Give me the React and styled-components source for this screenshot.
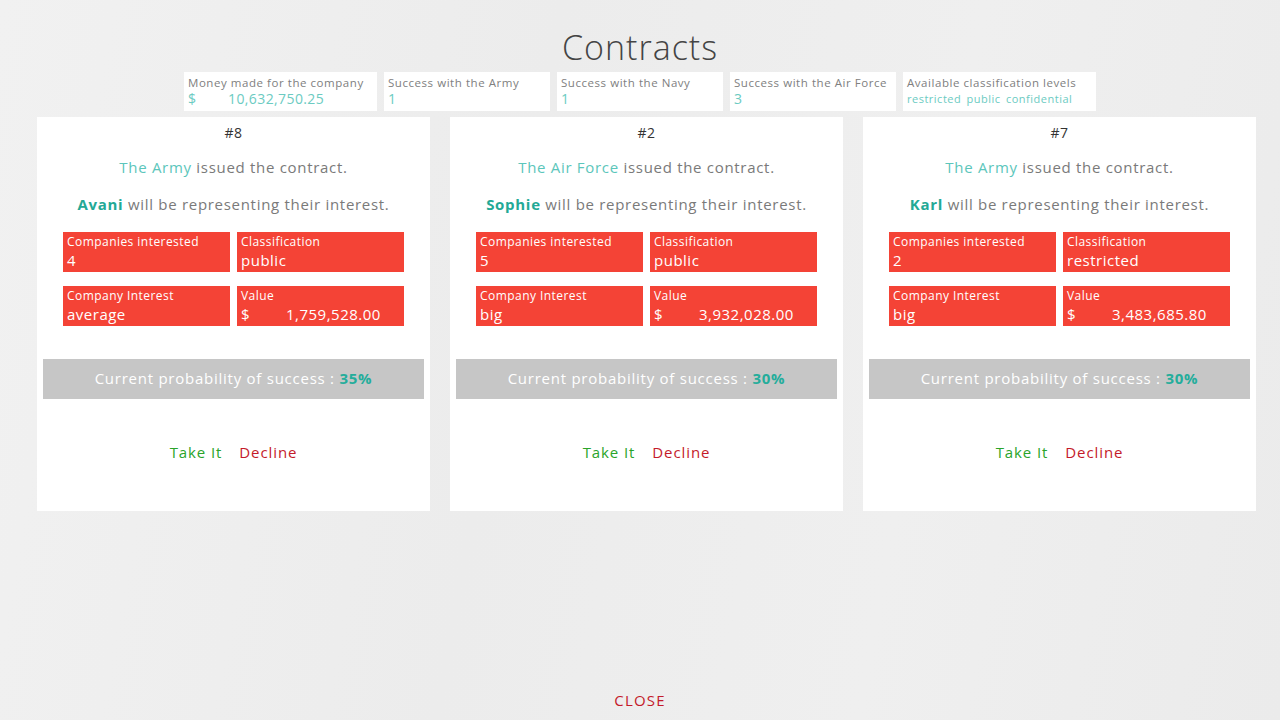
import React from "react";
import styled, { createGlobalStyle } from "styled-components";

const GlobalStyle = createGlobalStyle`
  html, body {
    margin: 0;
    padding: 0;
    background: #efefef;
    font-family: "Open Sans", "DejaVu Sans", sans-serif;
  }
`

const Page = styled.div`
  width: 1280px;
  height: 720px;
  display: flex;
  flex-direction: column;
  align-items: center;
  background: linear-gradient(100deg, #f1f1f1 0%, #ececec 40%, #efefef 70%, #ebebeb 100%);
  overflow: hidden;
`
const Title = styled.h1`
  margin: 26px 0 0;
  height: 42px;
  line-height: 42px;
  font-size: 34px;
  font-weight: 300;
  color: #444;
  letter-spacing: 1px;
`
const Stats = styled.div`
  display: flex;
  gap: 7px;
  margin-top: 4px;
`
const Stat = styled.div`
  width: ${props => props.wide ? "193px" : "166px"};
  height: 39px;
  box-sizing: border-box;
  padding: 3px 4px 0;
  background: #fff;
`
const StatLabel = styled.div`
  font-size: 11.5px;
  line-height: 15px;
  color: #808080;
  white-space: nowrap;
  letter-spacing: 0.55px;
`
const StatValue = styled.div`
  font-size: ${props => props.small ? "11px" : "14px"};
  line-height: 18px;
  color: #6ccbc2;
  white-space: nowrap;
  letter-spacing: ${props => props.small ? "0.5px" : "0.4px"};
  word-spacing: ${props => props.small ? "2px" : "normal"};
`
const Money = styled.span`
  display: inline-block;
  width: 40px;
`
const Cards = styled.div`
  display: flex;
  gap: 20px;
  margin-top: 6px;
  padding-left: 13px;
`
const Card = styled.div`
  width: 393px;
  height: 394px;
  box-sizing: border-box;
  padding: 7px 6px 0;
  background: #fff;
  display: flex;
  flex-direction: column;
  align-items: center;
`
const Number = styled.div`
  font-size: 14px;
  line-height: 18px;
  color: #333;
  letter-spacing: 0.5px;
`
const Line = styled.div`
  font-size: 15px;
  line-height: 20px;
  color: #7a7a7a;
  letter-spacing: 0.7px;
  margin-top: ${props => props.gap};
`
const Issuer = styled.span`
  color: #5cc6bb;
`
const Agent = styled.span`
  color: #23a996;
  font-weight: 700;
`
const Grid = styled.div`
  display: grid;
  grid-template-columns: 167px 167px;
  column-gap: 7px;
  row-gap: 14px;
  margin-top: 18px;
`
const Fact = styled.div`
  height: 40px;
  box-sizing: border-box;
  padding: 2px 4px 0;
  background: #f44336;
  color: #fff;
`
const FactLabel = styled.div`
  font-size: 12px;
  line-height: 16px;
  letter-spacing: 0.45px;
`
const FactValue = styled.div`
  font-size: 15px;
  line-height: 20px;
  white-space: nowrap;
  letter-spacing: 0.5px;
`
const Dollar = styled.span`
  display: inline-block;
  width: 45px;
`
const Odds = styled.div`
  width: 100%;
  height: 40px;
  margin-top: 33px;
  background: #c6c6c6;
  color: #fff;
  font-size: 15px;
  line-height: 39px;
  text-align: center;
  letter-spacing: 0.75px;
`
const Percent = styled.span`
  color: #24ad9b;
  font-weight: 700;
`
const Actions = styled.div`
  display: flex;
  gap: 17px;
  margin-top: 43px;
`
const Action = styled.span`
  font-size: 15px;
  line-height: 20px;
  letter-spacing: 0.9px;
  color: ${props => props.tone === "yes" ? "#2aa42a" : "#c41a2a"};
  cursor: pointer;
`
const Close = styled.div`
  margin-top: auto;
  margin-bottom: 10px;
  font-size: 15px;
  line-height: 20px;
  letter-spacing: 1.2px;
  color: #c41a2a;
  cursor: pointer;
`

const contracts = [
  { id: 8, issuer: "The Army", agent: "Avani", companies: 4, classification: "public", interest: "average", value: "1,759,528.00", odds: 35 },
  { id: 2, issuer: "The Air Force", agent: "Sophie", companies: 5, classification: "public", interest: "big", value: "3,932,028.00", odds: 30 },
  { id: 7, issuer: "The Army", agent: "Karl", companies: 2, classification: "restricted", interest: "big", value: "3,483,685.80", odds: 30 },
]

const App = () => {
  return (
    <Page>
      <GlobalStyle />
      <Title>Contracts</Title>
      <Stats>
        <Stat wide>
          <StatLabel>Money made for the company</StatLabel>
          <StatValue><Money>$</Money>10,632,750.25</StatValue>
        </Stat>
        <Stat>
          <StatLabel>Success with the Army</StatLabel>
          <StatValue>1</StatValue>
        </Stat>
        <Stat>
          <StatLabel>Success with the Navy</StatLabel>
          <StatValue>1</StatValue>
        </Stat>
        <Stat>
          <StatLabel>Success with the Air Force</StatLabel>
          <StatValue>3</StatValue>
        </Stat>
        <Stat wide>
          <StatLabel>Available classification levels</StatLabel>
          <StatValue small>restricted public confidential</StatValue>
        </Stat>
      </Stats>
      <Cards>
        {contracts.map(c => (
          <Card key={c.id}>
            <Number>#{c.id}</Number>
            <Line gap="15px"><Issuer>{c.issuer}</Issuer> issued the contract.</Line>
            <Line gap="17px"><Agent>{c.agent}</Agent> will be representing their interest.</Line>
            <Grid>
              <Fact>
                <FactLabel>Companies interested</FactLabel>
                <FactValue>{c.companies}</FactValue>
              </Fact>
              <Fact>
                <FactLabel>Classification</FactLabel>
                <FactValue>{c.classification}</FactValue>
              </Fact>
              <Fact>
                <FactLabel>Company Interest</FactLabel>
                <FactValue>{c.interest}</FactValue>
              </Fact>
              <Fact>
                <FactLabel>Value</FactLabel>
                <FactValue><Dollar>$</Dollar>{c.value}</FactValue>
              </Fact>
            </Grid>
            <Odds>Current probability of success : <Percent>{c.odds}%</Percent></Odds>
            <Actions>
              <Action tone="yes">Take It</Action>
              <Action tone="no">Decline</Action>
            </Actions>
          </Card>
        ))}
      </Cards>
      <Close>CLOSE</Close>
    </Page>
  )
}

export default App
